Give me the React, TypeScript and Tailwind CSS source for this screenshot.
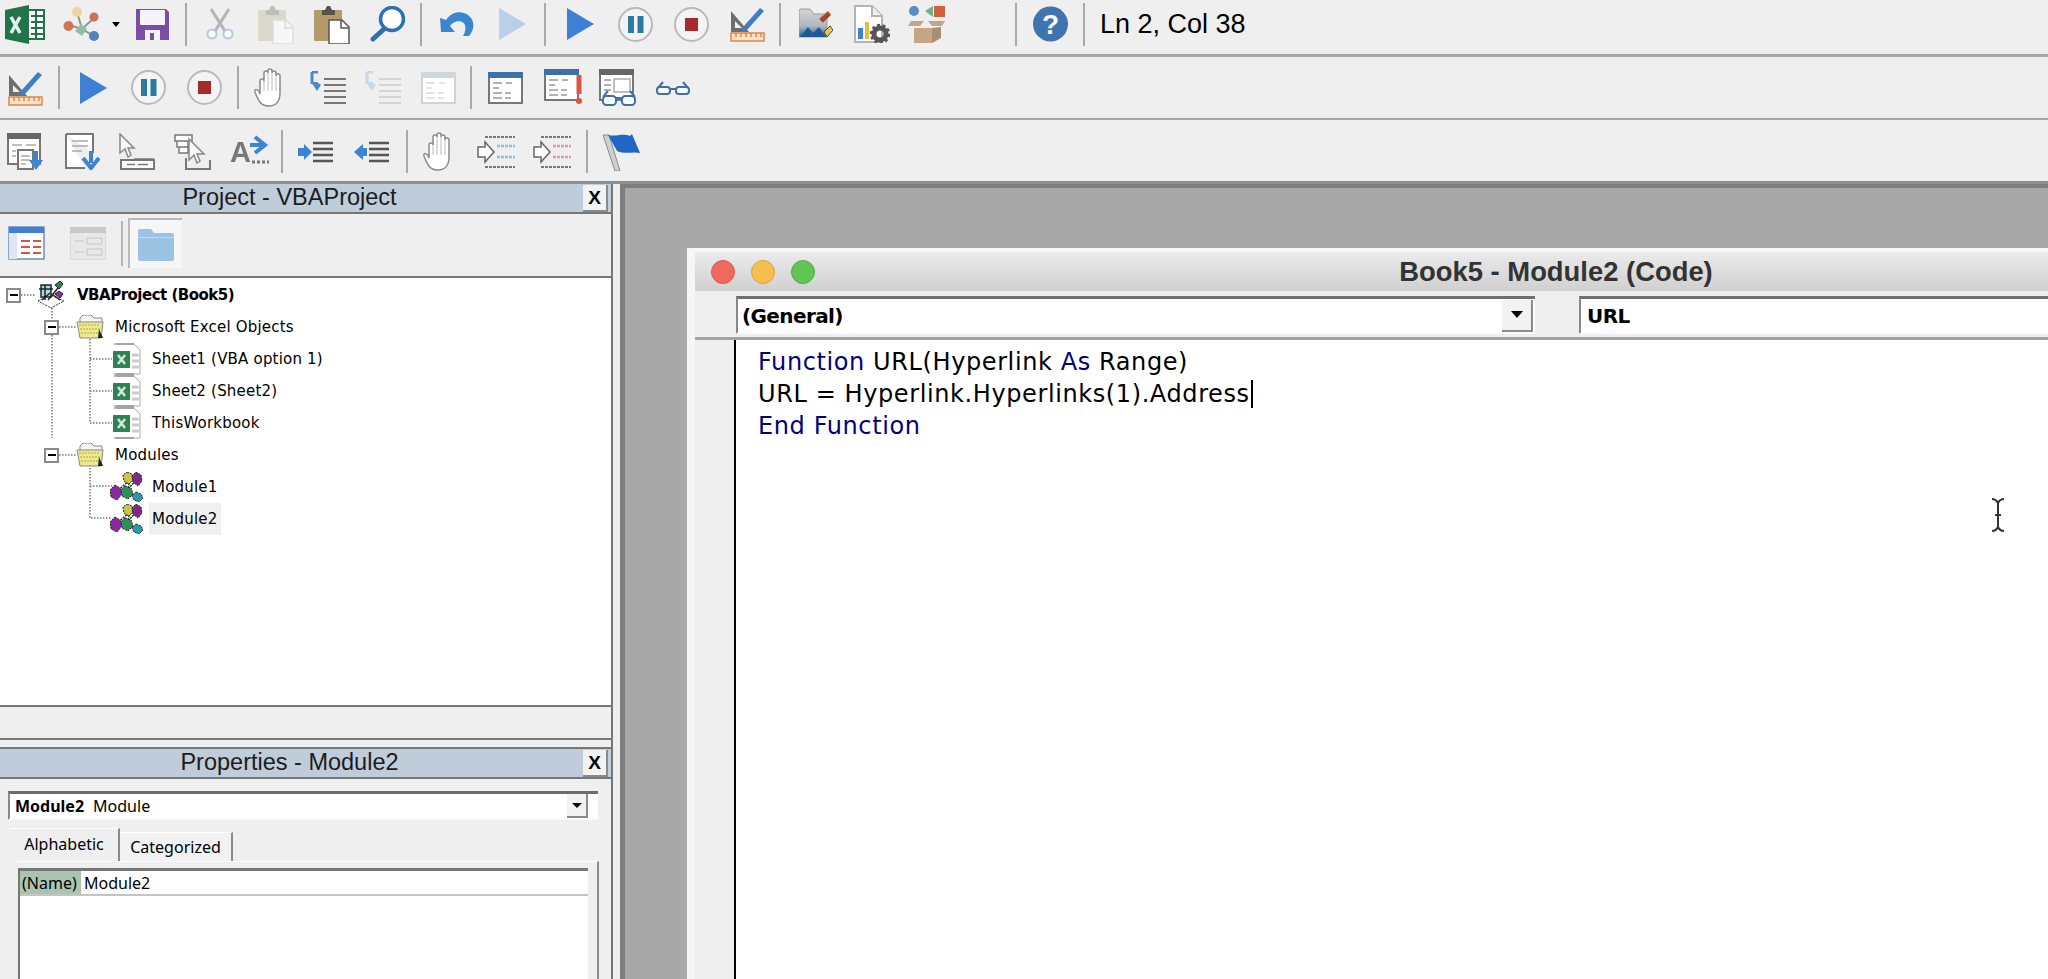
import type { ReactNode } from "react";

const ui = "font-['DejaVu_Sans','Noto_Sans',sans-serif]";

function Ico({ w, h, ml, children }: { w: number; h: number; ml: string; children: ReactNode }) {
  return (
    <svg width={w} height={h} viewBox={`0 0 ${w} ${h}`} className={`shrink-0 blur-[0.4px] ${ml}`}>
      {children}
    </svg>
  );
}

const Sep = ({ ml }: { ml: string }) => <div className={`w-[2px] h-[43px] shrink-0 bg-[#a9a9a9] ${ml}`} />;

function Excel({ ml }: { ml: string }) {
  return (
    <Ico w={40} h={39} ml={ml}>
      <rect x="22" y="5" width="17" height="29" fill="#fff" stroke="#21734a" strokeWidth="2" />
      <path d="M26 11h12M26 17h12M26 23h12M26 29h12M31 5v29" stroke="#21734a" strokeWidth="2" />
      <path d="M0 5 24 0v39L0 34Z" fill="#21734a" />
      <path d="M6 12l9 16M15 12 6 28" stroke="#e6f2ea" strokeWidth="3.500" />
    </Ico>
  );
}

function Network({ ml }: { ml: string }) {
  return (
    <Ico w={37} h={36} ml={ml}>
      <path d="M14 6 19 23 31 30M6 19 19 23 31 12M19 23 16 27" stroke="#8f9498" strokeWidth="2" fill="none" />
      <circle cx="14" cy="6" r="5" fill="#ecd69e" />
      <circle cx="5.500" cy="20" r="5" fill="#d47257" />
      <path d="M18 18l6 5-5 7-7-5Z" fill="#8fbfa8" />
      <circle cx="31" cy="11" r="4.500" fill="#cf6f5a" />
      <circle cx="31" cy="30" r="5" fill="#4f83bc" />
    </Ico>
  );
}

function Save({ ml }: { ml: string }) {
  return (
    <Ico w={33} h={32} ml={ml}>
      <path d="M0 1h30l3 3v28H0Z" fill="#7a4ea5" />
      <rect x="4" y="2" width="25" height="15" rx="1" fill="#f7f3fa" />
      <rect x="9" y="22" width="15" height="10" fill="#f7f3fa" />
      <rect x="14" y="25" width="4" height="7" fill="#7a4ea5" />
    </Ico>
  );
}

function Scissors({ ml }: { ml: string }) {
  return (
    <Ico w={28} h={32} ml={ml}>
      <path d="M5 1 19 23M23 1 9 23" stroke="#b4b4b4" strokeWidth="3" fill="none" />
      <circle cx="6" cy="26" r="4.500" fill="#fff" stroke="#b3c8df" strokeWidth="2" />
      <circle cx="22" cy="26" r="4.500" fill="#fff" stroke="#b3c8df" strokeWidth="2" />
    </Ico>
  );
}

function Paste({ ml, off }: { ml: string; off?: boolean }) {
  return (
    <Ico w={36} h={39} ml={ml}>
      <rect x="0" y="5" width="28" height="31" rx="1" fill={off ? "#ddd8cc" : "#b59b6c"} />
      <path d="M8 5h3l2-4h3l2 4h3v5H8Z" fill={off ? "#bdbdbd" : "#57534c"} />
      <path d="M15 15h13l7 7v17H15Z" fill={off ? "#f7f7f5" : "#fff"} stroke={off ? "#dddddd" : "#555"} strokeWidth="1.500" />
      <path d="M27 15v8h8" fill="none" stroke={off ? "#dddddd" : "#555"} strokeWidth="1.500" />
    </Ico>
  );
}

function Find({ ml }: { ml: string }) {
  return (
    <Ico w={36} h={36} ml={ml}>
      <circle cx="22" cy="13" r="11.500" fill="#fff" stroke="#2f6fb3" strokeWidth="3.500" />
      <path d="M14 23 3 33" stroke="#2f6fb3" strokeWidth="5" strokeLinecap="round" />
    </Ico>
  );
}

function Undo({ ml }: { ml: string }) {
  return (
    <Ico w={34} h={24} ml={ml}>
      <path d="M0 6 1 20 15 20 10 14C14 8 23 8 25 13 26 17 25 21 23 24H29C35 17 35 8 28 3 21-2 11 0 6 8Z" fill="#3a86cf" />
    </Ico>
  );
}

function Play({ ml, off }: { ml: string; off?: boolean }) {
  return (
    <Ico w={27} h={32} ml={ml}>
      <path d="M0 0 27 16 0 32Z" fill={off ? "#bad0ea" : "#3f7fd4"} />
    </Ico>
  );
}

function Pause({ ml }: { ml: string }) {
  return (
    <Ico w={35} h={35} ml={ml}>
      <circle cx="17.500" cy="17.500" r="16.500" fill="#f4f4f4" stroke="#b9b9b9" strokeWidth="2" />
      <rect x="10" y="9" width="6" height="17" fill="#2c7aa0" />
      <rect x="19.500" y="9" width="6" height="17" fill="#2c7aa0" />
    </Ico>
  );
}

function Stop({ ml }: { ml: string }) {
  return (
    <Ico w={35} h={35} ml={ml}>
      <circle cx="17.500" cy="17.500" r="16.500" fill="#f4f4f4" stroke="#b9b9b9" strokeWidth="2" />
      <rect x="11" y="11" width="13" height="13" fill="#a52a2a" />
    </Ico>
  );
}

function Design({ ml }: { ml: string }) {
  return (
    <Ico w={35} h={36} ml={ml}>
      <path d="M1 5V26H19ZM5 15V22H12Z" fill="#6e6e6e" fillRule="evenodd" />
      <path d="M13 21 30 2 34 5 17 24 11 26Z" fill="#3f7fc0" />
      <rect x="1" y="27" width="33" height="8" fill="#f6e3cf" stroke="#e0873f" strokeWidth="1.500" />
      <path d="M6 27v4M11 27v4M16 27v4M21 27v4M26 27v4M31 27v4" stroke="#e0873f" strokeWidth="1.500" />
    </Ico>
  );
}

function Explorer({ ml }: { ml: string }) {
  return (
    <Ico w={34} h={33} ml={ml}>
      <defs>
        <linearGradient id="fold" x1="0" y1="0" x2="0" y2="1">
          <stop offset="0" stopColor="#d4d4d4" />
          <stop offset="0.6" stopColor="#aeb8c2" />
          <stop offset="1" stopColor="#2f5f94" />
        </linearGradient>
      </defs>
      <path d="M0 3Q0 1 2 1H11L15 6H28V29H0Z" fill="url(#fold)" stroke="#9a9a9a" />
      <path d="M1 29 9 19 14 25 20 19 27 29Z" fill="#1e5a9a" />
      <path d="M20 11 29 3 32 7 24 15Z" fill="#a8403a" stroke="#c9a64a" />
      <path d="M25 24 31 18 34 22 28 29Z" fill="#e8c84a" stroke="#444" />
    </Ico>
  );
}

function DocGear({ ml }: { ml: string }) {
  return (
    <Ico w={36} h={38} ml={ml}>
      <path d="M1 1h17l10 10v26H1Z" fill="#fff" stroke="#b4b4b4" strokeWidth="2" />
      <path d="M18 1v10h10" fill="#f0f0f0" stroke="#b4b4b4" strokeWidth="2" />
      <rect x="4" y="23" width="5" height="11" fill="#3f7fd4" />
      <rect x="11" y="17" width="4" height="17" fill="#e9bb45" />
      <circle cx="26" cy="29" r="6" fill="none" stroke="#555" strokeWidth="5" />
      <circle cx="26" cy="29" r="9" fill="none" stroke="#555" strokeWidth="2.500" strokeDasharray="3 2.600" />
    </Ico>
  );
}

function Toolbox({ ml }: { ml: string }) {
  return (
    <Ico w={37} h={38} ml={ml}>
      <circle cx="6" cy="6" r="5" fill="#5b8cc4" />
      <path d="M17 6 25 1V12Z" fill="#6fb18b" />
      <rect x="26" y="1" width="11" height="11" fill="#d2603c" />
      <path d="M3 16H16L12 21H0ZM20 16H37L34 21H24Z" fill="#c5a583" />
      <path d="M6 23H24V38H6Z" fill="#c5a583" />
      <path d="M24 23 33 22V33L24 38Z" fill="#a88e74" />
    </Ico>
  );
}

function Help({ ml }: { ml: string }) {
  return (
    <svg width="35" height="36" viewBox="0 0 35 36" className={`shrink-0 ${ml}`}>
      <circle cx="17.500" cy="18" r="17.500" fill="#3f74ae" />
      <text x="17.500" y="28" textAnchor="middle" fontSize="28" fontWeight="700" fill="#fff" fontFamily="Liberation Sans">
        ?
      </text>
    </svg>
  );
}

function Hand({ ml }: { ml: string }) {
  return (
    <Ico w={30} h={39} ml={ml}>
      <path
        d="M6 26V13a2 2 0 0 1 4 0V5a2 2 0 0 1 4 0V3a2 2 0 0 1 4 0V5a2 2 0 0 1 4 0v3a2 2 0 0 1 4 0v17c0 8-4 13-11 13S5 35 1 24c-1-3 3-4 5 2Z"
        fill="#fff"
        stroke="#8c8c8c"
        strokeWidth="1.500"
      />
      <path d="M10 13v10M14 5v18M18 5v18M22 8v15" stroke="#bcbcbc" strokeWidth="1" />
    </Ico>
  );
}

function StepLines({ ml, off }: { ml: string; off?: boolean }) {
  const bar = off ? "#d4d4d4" : "#777";
  const arrow = off ? "#c5d9ec" : "#4a8ac9";
  return (
    <Ico w={36} h={33} ml={ml}>
      <path d="M14 8h22M14 14h22M14 20h22M14 26h22M14 32h22" stroke={bar} strokeWidth="2" />
      <path d="M2 1H8M2 1V13" stroke={arrow} strokeWidth="3" fill="none" />
      <path d="M1 11h6l4 3-4 6Z" fill={arrow} />
    </Ico>
  );
}

function Win({ ml, bar = "#3d6fa8", off, children, w = 35, h = 32 }: { ml: string; bar?: string; off?: boolean; children?: ReactNode; w?: number; h?: number }) {
  const line = off ? "#dcdcdc" : "#9a9a9a";
  const frame = off ? "#d2d2d2" : "#777";
  return (
    <Ico w={w} h={h} ml={ml}>
      <rect x="1" y="1" width="33" height="30" fill="#fff" stroke={frame} strokeWidth="2" />
      <rect x="0" y="0" width="35" height="6" fill={bar} />
      <path d="M5 11h9M18 11h6M5 16h6M5 21h9M17 21h6M5 26h9M17 26h6" stroke={line} strokeWidth="1.500" />
      {children}
    </Ico>
  );
}

function Glasses({ ml }: { ml: string }) {
  return (
    <Ico w={34} h={14} ml={ml}>
      <path d="M7 1 2 7M27 1 32 7" stroke="#3f6fa8" strokeWidth="2" fill="none" />
      <rect x="1" y="6" width="13" height="7" rx="3" fill="#fff" stroke="#3f6fa8" strokeWidth="2" />
      <rect x="20" y="6" width="13" height="7" rx="3" fill="#fff" stroke="#3f6fa8" strokeWidth="2" />
      <path d="M14 8h6" stroke="#3f6fa8" strokeWidth="2" />
    </Ico>
  );
}

function WinGlasses({ ml }: { ml: string }) {
  return (
    <Ico w={37} h={37} ml={ml}>
      <rect x="1" y="1" width="33" height="30" fill="#fff" stroke="#777" strokeWidth="2" />
      <rect x="0" y="0" width="35" height="6" fill="#666" />
      <rect x="15" y="10" width="16" height="13" fill="#fff" stroke="#aaa" strokeWidth="1.500" />
      <path d="M5 11h7M5 16h7M5 21h7" stroke="#999" strokeWidth="1.500" />
      <path d="M9 22 4 28M31 22 36 28" stroke="#3f6fa8" strokeWidth="2" />
      <rect x="4" y="27" width="13" height="9" rx="3.500" fill="#fff" stroke="#3f6fa8" strokeWidth="2" />
      <rect x="23" y="27" width="13" height="9" rx="3.500" fill="#fff" stroke="#3f6fa8" strokeWidth="2" />
      <path d="M17 29h6" stroke="#3f6fa8" strokeWidth="2" />
    </Ico>
  );
}

function InsertForm({ ml }: { ml: string }) {
  return (
    <Ico w={36} h={38} ml={ml}>
      <rect x="1" y="1" width="32" height="30" fill="#fff" stroke="#777" strokeWidth="2" />
      <rect x="0" y="0" width="34" height="6" fill="#666" />
      <path d="M5 12h10M19 12h10M5 18h4M5 23h4" stroke="#aaa" strokeWidth="1.500" />
      <rect x="11" y="17" width="15" height="19" fill="#fff" stroke="#777" strokeWidth="2" />
      <path d="M14 23h9M14 27h9M14 31h5" stroke="#aaa" strokeWidth="1.500" />
      <path d="M29 18v12" stroke="#3f84d0" strokeWidth="4" />
      <path d="M22 27h14l-7 10Z" fill="#3f84d0" />
    </Ico>
  );
}

function DocDown({ ml }: { ml: string }) {
  return (
    <Ico w={35} h={37} ml={ml}>
      <path d="M1 1H28V20M20 35H1V1" fill="#fff" stroke="#777" strokeWidth="2" />
      <path d="M7 8h16M7 13h16M7 18h10" stroke="#aaa" strokeWidth="1.500" />
      <path d="M26 18v12" stroke="#3f84d0" strokeWidth="4" />
      <path d="M18 25l8 10 8-10" fill="none" stroke="#3f84d0" strokeWidth="4" />
    </Ico>
  );
}

function Pointer({ ml }: { ml: string }) {
  return (
    <Ico w={37} h={37} ml={ml}>
      <path d="M2 1V20L7 16 10 24 13 22 10 15H16Z" fill="#f8f8f8" stroke="#888" strokeWidth="1.500" />
      <rect x="3" y="27" width="33" height="9" fill="#fff" stroke="#777" strokeWidth="2" />
      <path d="M9 31.500h8M20 31.500h10" stroke="#777" strokeWidth="1.500" />
      <path d="M16 26h20" fill="none" stroke="#777" strokeWidth="1.500" />
    </Ico>
  );
}

function Pointers({ ml }: { ml: string }) {
  return (
    <Ico w={37} h={36} ml={ml}>
      <path d="M1 1H18V7H1ZM3 7H14V13H3ZM5 13H14V19H5Z" fill="#fff" stroke="#777" strokeWidth="1.500" />
      <path d="M15 5V26L20 21 23 29 26 27 23 20H30Z" fill="#f8f8f8" stroke="#888" strokeWidth="1.500" />
      <path d="M12 24v11h24V26" fill="none" stroke="#777" strokeWidth="2" />
    </Ico>
  );
}

function Replace({ ml }: { ml: string }) {
  return (
    <svg width="39" height="36" viewBox="0 0 39 36" className={`shrink-0 blur-[0.3px] ${ml}`}>
      <text x="0" y="28" fontSize="29" fontWeight="700" fill="#777" fontFamily="Liberation Sans">
        A
      </text>
      <path d="M20 11h14" stroke="#3f84d0" strokeWidth="4" />
      <path d="M25 3l10 8-10 8" fill="none" stroke="#3f84d0" strokeWidth="4" />
      <path d="M22 28h17" stroke="#777" strokeWidth="3" strokeDasharray="3 2" />
    </svg>
  );
}

function Indent({ ml, back }: { ml: string; back?: boolean }) {
  return (
    <Ico w={35} h={22} ml={ml}>
      <path d="M15 2h20M15 8h20M15 14h20M15 20h20" stroke="#555" strokeWidth="2.500" />
      {back ? <path d="M13 7H9V3L0 11 9 19V15H13Z" fill="#3f84d0" /> : <path d="M0 7H6V3L14 11 6 19V15H0Z" fill="#3f84d0" />}
    </Ico>
  );
}

function Compile({ ml, tint }: { ml: string; tint: string }) {
  return (
    <Ico w={41} h={33} ml={ml}>
      <path d="M9 2h30M9 32h30" stroke="#777" strokeWidth="2" strokeDasharray="3 1" />
      <path d="M2 12h7V7l9 10-9 10v-5H2Z" fill="#fff" stroke="#666" strokeWidth="1.500" />
      <path d="M21 11h18M21 22h18" stroke={tint} strokeWidth="2.500" strokeDasharray="3 1" />
    </Ico>
  );
}

function Flag({ ml }: { ml: string }) {
  return (
    <Ico w={38} h={38} ml={ml}>
      <path d="M1 2H7L18 38H13Z" fill="#cfcfcf" stroke="#8a8a8a" />
      <path d="M6 2C14 4 20 0 28 3L30 1 38 20 C30 18 24 22 15 18Z" fill="#2166c5" />
    </Ico>
  );
}

function TreeBox({ className }: { className: string }) {
  return (
    <div className={`flex h-[15px] w-[15px] shrink-0 items-center justify-center border-2 border-[#8a8a8a] bg-white ${className}`}>
      <div className="h-[2px] w-[8px] bg-black" />
    </div>
  );
}

function ProjectIcon({ className }: { className: string }) {
  return (
    <svg width="31" height="30" viewBox="0 0 31 30" className={`shrink-0 blur-[0.3px] ${className}`}>
      <path d="M2 21 14 15 28 21 15 28Z" fill="#fff" stroke="#333" strokeDasharray="2 1" />
      <path d="M5 5H15V17H5Z" fill="#a9dbe0" stroke="#222" strokeWidth="1.500" />
      <path d="M3 9H17M9 5V20M6 20 14 13M12 20 22 8M16 14 24 20" stroke="#222" strokeWidth="1.500" />
      <path d="M19 5l5-4 3 3-4 5Z" fill="#1f8a4c" stroke="#222" />
      <path d="M19 14l4-3 4 3-3 4Z" fill="#9b2b9e" stroke="#222" />
    </svg>
  );
}

function OpenFolder({ className }: { className: string }) {
  return (
    <svg width="28" height="24" viewBox="0 0 28 24" className={`shrink-0 blur-[0.3px] ${className}`}>
      <path d="M4 3 7 0H15L18 3H26V8H4Z" fill="#f4f4f0" stroke="#888" />
      <path d="M1 7H27L25 23H4Z" fill="#eee88e" stroke="#888" />
      <path d="M3 10h21M4 14h20M5 18h18" stroke="#cfc768" strokeWidth="2" strokeDasharray="2 1" />
      <path d="M23 14 27 23 22 23Z" fill="#222" />
    </svg>
  );
}

function SheetIcon({ className }: { className: string }) {
  return (
    <svg width="29" height="32" viewBox="0 0 29 32" className={`shrink-0 blur-[0.3px] ${className}`}>
      <path d="M4 1H22L28 7V31H4" fill="#fff" stroke="#aaa" />
      <path d="M2 1h20M2 31h20" stroke="#777" />
      <path d="M20 12h7M20 18h7M20 24h7" stroke="#ccc" strokeWidth="3" />
      <rect x="1" y="8" width="17" height="17" fill="#2e8352" />
      <path d="M6 12l7 9M13 12l-7 9" stroke="#cfe6d6" strokeWidth="2.500" />
    </svg>
  );
}

function ModuleIcon({ className }: { className: string }) {
  return (
    <svg width="33" height="30" viewBox="0 0 33 30" className={`shrink-0 blur-[0.3px] ${className}`}>
      <path d="M6 20 20 8M19 8 18 22M26 9 16 18M19 22 28 25" stroke="#222" strokeWidth="1.500" strokeDasharray="2 1" fill="none" />
      <path d="M17 0l5 2 1 6-4 4-5-3-1-6Z" fill="#c9c54a" stroke="#222" strokeDasharray="2 1" />
      <path d="M26 0l5 3 1 6-4 5-5-4-1-6Z" fill="#7d2a8a" stroke="#222" strokeDasharray="2 1" />
      <path d="M5 13l5 3 2 6-5 6-6-3-1-7Z" fill="#8b2aa0" stroke="#222" strokeDasharray="2 1" />
      <path d="M15 14l6 2 2 6-5 5-6-3-1-6Z" fill="#2f8f5c" stroke="#222" strokeDasharray="2 1" />
      <path d="M26 20l5 2 2 4-4 4-5-2-2-4Z" fill="#2a9aa8" stroke="#222" strokeDasharray="2 1" />
    </svg>
  );
}

function TreeRow({ pad, icon, label, bold, active }: { pad: string; icon: ReactNode; label: string; bold?: boolean; active?: boolean }) {
  return (
    <div className={`flex h-[32px] items-center ${pad}`}>
      {icon}
      <span className={`flex h-[32px] items-center px-[3px] text-[15px] text-black ${bold ? "font-bold tracking-[-0.5px]" : "tracking-[0.2px]"} ${active ? "bg-[#f0f0f0]" : ""}`}>
        {label}
      </span>
    </div>
  );
}

function ProjectTree() {
  return (
    <div className="relative h-[429px] shrink-0 border-b-2 border-[#777] bg-white pt-[1px]">
      {/* dotted connectors */}
      <svg className="absolute left-0 top-0" width="120" height="260">
        <g stroke="#777" strokeWidth="1.500" strokeDasharray="1.500 1.500" fill="none">
          <path d="M21 17H36M52 27V160M59 49H76M90 58V145M90 145H112M90 81H112M90 113H112M90 187V240H112M90 208H112M59 177H76" />
        </g>
      </svg>
      <div className="relative">
        <TreeRow pad="pl-[6px]" label="VBAProject (Book5)" bold icon={<><TreeBox className="" /><ProjectIcon className="ml-[15px] mr-[7px]" /></>} />
        <TreeRow pad="pl-[44px]" label="Microsoft Excel Objects" icon={<><TreeBox className="" /><OpenFolder className="ml-[17px] mr-[8px]" /></>} />
        <TreeRow pad="pl-[112px]" label="Sheet1 (VBA option 1)" icon={<SheetIcon className="mr-[8px]" />} />
        <TreeRow pad="pl-[112px]" label="Sheet2 (Sheet2)" icon={<SheetIcon className="mr-[8px]" />} />
        <TreeRow pad="pl-[112px]" label="ThisWorkbook" icon={<SheetIcon className="mr-[8px]" />} />
        <TreeRow pad="pl-[44px]" label="Modules" icon={<><TreeBox className="" /><OpenFolder className="ml-[17px] mr-[8px]" /></>} />
        <TreeRow pad="pl-[110px]" label="Module1" icon={<ModuleIcon className="mr-[6px]" />} />
        <TreeRow pad="pl-[110px]" label="Module2" active icon={<ModuleIcon className="mr-[6px]" />} />
      </div>
    </div>
  );
}

function PanelTitle({ title }: { title: string }) {
  return (
    <div className="relative flex h-[30px] shrink-0 items-center justify-center border-b-2 border-[#777] bg-[#bfccd9] pr-[32px] font-['Liberation_Sans',sans-serif] text-[23.5px] text-[#1c1c1c]">
      {title}
      <div className="absolute right-[3px] top-[1px] flex h-[27px] w-[25px] items-center justify-center border-b-2 border-r-2 border-[#8a8a8a] bg-[#f2f2f2] text-[19px] font-bold leading-none text-black">
        X
      </div>
    </div>
  );
}

function DropButton({ className, arrow }: { className: string; arrow: string }) {
  return (
    <div className={`flex items-center justify-center border-b-2 border-r-2 border-[#8a8a8a] bg-[#f2f2f2] ${className}`}>
      <div className={`h-0 w-0 border-x-transparent border-t-black ${arrow}`} />
    </div>
  );
}

function Inset({ className, children }: { className: string; children: ReactNode }) {
  return <div className={`flex items-center border-b-2 border-l-2 border-t-[3px] border-b-[#fafafa] border-l-[#888] border-t-[#6e6e6e] bg-white ${className}`}>{children}</div>;
}

export default function App() {
  return (
    <div className={`flex h-[979px] w-[2048px] flex-col overflow-hidden bg-[#efefef] ${ui}`}>
      <div className="flex h-[57px] shrink-0 items-center border-b-[3px] border-b-[#a6a6a6] pb-[6px]">
        <Excel ml="ml-[5px]" />
        <Network ml="ml-[18px]" />
        <div className="ml-[12px] h-0 w-0 shrink-0 border-x-[4px] border-t-[5px] border-x-transparent border-t-black" />
        <Save ml="ml-[16px]" />
        <Sep ml="ml-[16px]" />
        <Scissors ml="ml-[19px]" />
        <Paste ml="ml-[24px]" off />
        <Paste ml="ml-[20px]" />
        <Find ml="ml-[20px]" />
        <Sep ml="ml-[14px]" />
        <Undo ml="ml-[18px]" />
        <Play ml="ml-[25px]" off />
        <Sep ml="ml-[18px]" />
        <Play ml="ml-[21px]" />
        <Pause ml="ml-[24px]" />
        <Stop ml="ml-[21px]" />
        <Design ml="ml-[21px]" />
        <Sep ml="ml-[14px]" />
        <Explorer ml="ml-[18px]" />
        <DocGear ml="ml-[21px]" />
        <Toolbox ml="ml-[18px]" />
        <Sep ml="ml-[70px]" />
        <Help ml="ml-[16px]" />
        <Sep ml="ml-[15px]" />
        <span className="ml-[15px] font-['Liberation_Sans',sans-serif] text-[27px] text-black">Ln 2, Col 38</span>
      </div>

      <div className="flex h-[63px] shrink-0 items-center border-b-[2px] border-b-[#a6a6a6]">
        <Design ml="ml-[8px]" />
        <Sep ml="ml-[15px]" />
        <Play ml="ml-[20px]" />
        <Pause ml="ml-[24px]" />
        <Stop ml="ml-[21px]" />
        <Sep ml="ml-[15px]" />
        <Hand ml="ml-[15px]" />
        <StepLines ml="ml-[26px]" />
        <StepLines ml="ml-[19px]" off />
        <Win ml="ml-[20px]" bar="#cfd6dc" off />
        <Sep ml="ml-[14px]" />
        <Win ml="ml-[16px]" />
        <Win ml="ml-[21px]" w={38} h={37} bar="#3d6fa8">
          <path d="M35 6V25" stroke="#d9573f" strokeWidth="5" />
          <circle cx="35" cy="32" r="3" fill="#d9573f" />
        </Win>
        <WinGlasses ml="ml-[17px]" />
        <Glasses ml="ml-[20px]" />
      </div>

      <div className="flex h-[64px] shrink-0 items-center border-b-[3px] border-b-[#8d8d8d] pt-[2px]">
        <InsertForm ml="ml-[7px]" />
        <DocDown ml="ml-[22px]" />
        <Pointer ml="ml-[18px]" />
        <Pointers ml="ml-[19px]" />
        <Replace ml="ml-[19px]" />
        <Sep ml="ml-[12px]" />
        <Indent ml="ml-[15px]" />
        <Indent ml="ml-[21px]" back />
        <Sep ml="ml-[17px]" />
        <Hand ml="ml-[15px]" />
        <Compile ml="ml-[23px]" tint="#8fc0e4" />
        <Compile ml="ml-[15px]" tint="#e89a9a" />
        <Sep ml="ml-[13px]" />
        <Flag ml="ml-[14px]" />
      </div>

      <div className="flex min-h-0 flex-1">
        <aside className="flex w-[613px] shrink-0 flex-col border-r-2 border-r-[#777]">
          <PanelTitle title="Project - VBAProject" />
          <div className="flex h-[64px] shrink-0 items-center border-b-2 border-[#777] pb-[4px]">
            <svg width="37" height="35" viewBox="0 0 37 35" className="ml-[8px] shrink-0">
              <rect x="1" y="1" width="35" height="32" fill="#fff" stroke="#6f8fb8" strokeWidth="1.500" />
              <rect x="1" y="1" width="35" height="6" fill="#3f7fd4" />
              <rect x="1" y="7" width="8" height="26" fill="#dde6f2" />
              <path d="M13 15h9M25 15h8M13 21h9M25 21h8M13 27h9M25 27h8" stroke="#d9573f" strokeWidth="2" />
            </svg>
            <svg width="36" height="33" viewBox="0 0 36 33" className="ml-[25px] shrink-0">
              <rect x="0" y="0" width="36" height="33" fill="#e8e8e8" stroke="#cfcfcf" />
              <rect x="0" y="0" width="36" height="6" fill="#c9c9c9" />
              <path d="M5 14h9M5 25h9M17 11h15v6H17ZM17 22h15v6H17Z" stroke="#c4c4c4" fill="none" />
            </svg>
            <div className="ml-[15px] h-[45px] w-[2px] bg-[#b5b5b5]" />
            <div className="ml-[5px] flex h-[50px] w-[54px] items-center justify-center border-l-2 border-t-2 border-[#b9b9b9] bg-[#f6f6f6]">
              <svg width="36" height="33" viewBox="0 0 36 33">
                <path d="M0 3a2 2 0 0 1 2-2h11l3 4h18a2 2 0 0 1 2 2v24a2 2 0 0 1-2 2H2a2 2 0 0 1-2-2Z" fill="#9cc3e4" />
                <rect x="0" y="9" width="36" height="1" fill="#c3dcf0" />
              </svg>
            </div>
          </div>
          <ProjectTree />
          <div className="h-[33px] shrink-0 border-b-2 border-[#777]" />
          <div className="h-[9px] shrink-0 border-b-2 border-[#777]" />
          <PanelTitle title="Properties - Module2" />
          <div className="flex-1 px-[8px] pt-[12px]">
            <Inset className="h-[29px] w-[590px] pl-[5px] pr-[10px] font-['Noto_Sans',sans-serif] text-[16px] text-black">
              <b>Module2</b>
              <span className="ml-[9px]">Module</span>
              <DropButton className="ml-auto h-[24px] w-[21px]" arrow="border-x-[5px] border-t-[5px]" />
            </Inset>
            <div className="mt-[8px] flex h-[33px] items-end font-['Noto_Sans',sans-serif] text-[16px] text-black">
              <div className="ml-[2px] flex h-[33px] w-[110px] items-start justify-center border-r-2 border-t border-r-[#8a8a8a] border-t-white pt-[3px]">Alphabetic</div>
              <div className="flex h-[29px] w-[113px] items-center justify-center border-r-2 border-t border-r-[#8a8a8a] border-t-white bg-[#f2f2f2]">Categorized</div>
            </div>
            <div className="ml-[10px] h-[200px] w-[581px] border-r-2 border-t border-r-[#8a8a8a] border-t-white pr-[9px] pt-[6px]">
              <div className="h-full border-l-2 border-t-[3px] border-l-[#777] border-t-[#777] bg-white">
                <div className="flex h-[25px] items-center border-b-2 border-[#c4c4c4] font-['Noto_Sans',sans-serif] text-[16px] text-black">
                  <div className="flex h-full w-[61px] items-center bg-[#a9c5b0] pl-[2px]">(Name)</div>
                  <div className="pl-[3px]">Module2</div>
                </div>
              </div>
            </div>
          </div>
        </aside>

        <div className="w-[7px] shrink-0" />

        <main className="relative min-w-0 flex-1 overflow-hidden border-l-[5px] border-t-[4px] border-l-[#7d7d7d] border-t-[#7d7d7d] bg-[#a8a8a8] pl-[62px] pt-[60px]">
          <div className="flex h-[800px] w-[1730px] flex-col border-l-[8px] border-t-[4px] border-[#f6f6f6]">
            <div className="relative flex h-[39px] shrink-0 items-center justify-center bg-gradient-to-b from-[#ebebeb] to-[#d0d0d0] font-['Liberation_Sans',sans-serif] text-[27.4px] font-bold text-[#333]">
              <div className="absolute left-[16px] flex gap-[16px]">
                <div className="h-[24px] w-[24px] rounded-full border border-[#d8574f] bg-[#f0695f]" />
                <div className="h-[24px] w-[24px] rounded-full border border-[#dda23c] bg-[#f6bd4f]" />
                <div className="h-[24px] w-[24px] rounded-full border border-[#4ea94a] bg-[#62c654]" />
              </div>
              Book5 - Module2 (Code)
            </div>
            <div className="flex h-[49px] shrink-0 border-b-[3px] border-[#a3a3a3] bg-[#efefef] pl-[41px] pt-[5px]">
              <Inset className="h-[38px] w-[799px] pl-[4px] pr-[2px] text-[20px] font-bold tracking-[-0.6px] text-black">
                (General)
                <DropButton className="ml-auto h-[32px] w-[31px]" arrow="border-x-[6px] border-t-[7px]" />
              </Inset>
              <Inset className="ml-[44px] h-[38px] flex-1 pl-[6px] text-[20px] font-bold tracking-[-0.6px] text-black">URL</Inset>
            </div>
            <div className="flex min-h-0 flex-1">
              <div className="w-[41px] shrink-0 border-r-2 border-black bg-[#efefef]" />
              <div className="flex-1 bg-white pl-[22px] pt-[6px] text-[24px] leading-[32px] tracking-[0.6px] text-black">
                <div>
                  <span className="text-[#000080]">Function</span> URL(Hyperlink <span className="text-[#000080]">As</span> Range)
                </div>
                <div className="flex items-center">
                  URL = Hyperlink.Hyperlinks(1).Address
                  <span className="ml-[1px] h-[28px] w-[2px] bg-black" />
                </div>
                <div className="text-[#000080]">End Function</div>
              </div>
            </div>
          </div>
          {/* mouse cursor */}
          <svg className="absolute left-[1366px] top-[310px]" width="14" height="34" viewBox="0 0 14 34">
            <path d="M1 1C4 1 6 3 7 5 8 3 10 1 13 1M7 5V29M1 33C4 33 6 31 7 29 8 31 10 33 13 33M4 17H10" fill="none" stroke="#333" strokeWidth="2" />
          </svg>
        </main>
      </div>
    </div>
  );
}
